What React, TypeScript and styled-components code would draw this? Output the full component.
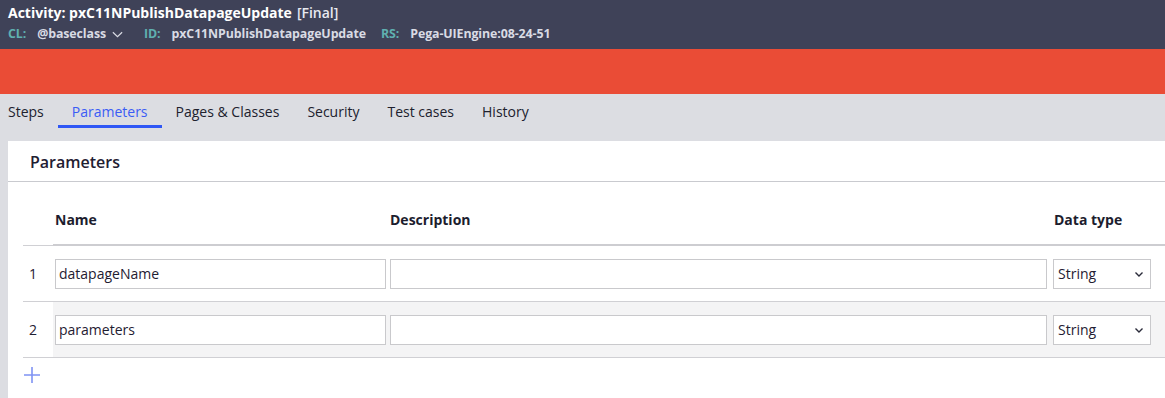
import React from "react";
import styled, { createGlobalStyle } from "styled-components";

const Global = createGlobalStyle`
  html, body { margin: 0; padding: 0; }
  body {
    font-family: "Open Sans", "Noto Sans", sans-serif;
    background: #dcdde2;
    width: 1165px;
    height: 398px;
    overflow: hidden;
    color: #1f2032;
  }
  * { box-sizing: border-box; }
`;

const Page = styled.div`
  display: flex;
  flex-direction: column;
  height: 398px;
`;

const Header = styled.header`
  background: #3f4258;
  height: 49px;
  padding: 3px 8px 0;
  display: flex;
  flex-direction: column;
`;

const Title = styled.div`
  color: #ffffff;
  font-size: 14px;
  font-weight: 700;
  line-height: 20px;
  display: flex;
  align-items: baseline;
  gap: 5px;
`;

const Status = styled.span`
  font-size: 14px;
  font-weight: 600;
  color: #e8e9ef;
`;

const Meta = styled.div`
  display: flex;
  align-items: center;
  margin-top: 2px;
  font-size: 12.4px;
  font-weight: 700;
  line-height: 18px;
  letter-spacing: -0.1px;
`;

const MetaItem = styled.span`
  display: inline-flex;
  align-items: center;
  margin-right: 15px;
`;

const MetaLabel = styled.span`
  color: #5fb0b0;
  margin-right: 11px;
`;

const MetaValue = styled.span`
  color: #d9dbe4;
`;

const Chevron = styled.svg`
  margin-left: 6px;
  margin-right: 6px;
`;

const Banner = styled.div`
  background: #ea4c36;
  height: 45px;
`;

const Tabs = styled.nav`
  height: 47px;
  display: flex;
  align-items: stretch;
  padding-left: 8px;
`;

const Tab = styled.div<{ $active?: boolean; $first?: boolean }>`
  font-size: 14px;
  line-height: 20px;
  padding: 8px 14px 0 ${(p) => (p.$first ? "0" : "14px")};
  height: 34px;
  color: ${(p) => (p.$active ? "#3a5cf5" : "#20212e")};
  border-bottom: 3px solid ${(p) => (p.$active ? "#2f57f5" : "transparent")};
`;

const Panel = styled.section`
  flex: 1;
  margin-left: 8px;
  background: #ffffff;
  display: flex;
  flex-direction: column;
`;

const PanelTitle = styled.h2`
  margin: 0;
  height: 41px;
  padding: 10px 0 0 22px;
  font-size: 16px;
  font-weight: 600;
  line-height: 22px;
  color: #1f2032;
  border-bottom: 1px solid #c9cacf;
`;

const Table = styled.div`
  padding-left: 15px;
  display: flex;
  flex-direction: column;
`;

const HeadRow = styled.div`
  display: grid;
  grid-template-columns: 30px 1fr;
  height: 64px;
`;

const HeadNum = styled.div`
  border-bottom: 1px solid #d0d0d4;
`;

const HeadCells = styled.div`
  display: grid;
  grid-template-columns: 331px 657px 100px;
  column-gap: 4px;
  padding-left: 2px;
  align-items: end;
  padding-bottom: 14px;
  border-bottom: 2px solid #cdcdd1;
`;

const HeadCell = styled.div<{ $shift?: number }>`
  font-size: 14px;
  font-weight: 700;
  line-height: 20px;
  color: #1c1d2e;
  padding-left: ${(p) => p.$shift ?? 0}px;
  ${(p) => (p.$shift ? "margin-left: 2px;" : "")}
`;

const Row = styled.div`
  display: grid;
  grid-template-columns: 30px 1fr;
  height: 56px;
  border-bottom: 1px solid #d0d0d4;
`;

const RowNum = styled.div`
  display: flex;
  align-items: center;
  padding-left: 6px;
  font-size: 14px;
  color: #1f2032;
`;

const RowCells = styled.div<{ $alt?: boolean }>`
  background: ${(p) => (p.$alt ? "#f4f4f5" : "transparent")};
  display: grid;
  grid-template-columns: 331px 657px 100px;
  column-gap: 4px;
  padding-left: 2px;
  align-items: center;
`;

const Input = styled.div`
  height: 30px;
  border: 1px solid #c9c9cc;
  background: #ffffff;
  font-size: 14px;
  line-height: 28px;
  padding-left: 3px;
  color: #1f2032;
`;

const Select = styled.div`
  margin-left: 2px;
  height: 30px;
  border: 1px solid #c9c9cc;
  background: #ffffff;
  font-size: 14px;
  line-height: 28px;
  padding: 0 6px 0 4px;
  color: #1f2032;
  display: flex;
  justify-content: space-between;
  align-items: center;
`;

const AddButton = styled.div`
  padding: 9px 0 0 1px;
  line-height: 0;
`;

const ChevronDown = ({ color, size }: { color: string; size: number }) => (
  <svg width={size} height={size} viewBox="0 0 10 10" fill="none">
    <path d="M1.5 3.5 L5 7 L8.5 3.5" stroke={color} strokeWidth="1.4" />
  </svg>
);

const rows = [
  { n: 1, name: "datapageName" },
  { n: 2, name: "parameters" },
];

export default function App() {
  return (
    <>
      <Global />
      <Page>
        <Header>
          <Title>
            Activity: pxC11NPublishDatapageUpdate <Status>[Final]</Status>
          </Title>
          <Meta>
            <MetaItem>
              <MetaLabel>CL:</MetaLabel>
              <MetaValue>@baseclass</MetaValue>
              <Chevron width="11" height="11" viewBox="0 0 10 10" fill="none">
                <path d="M0.8 3 L5 7 L9.2 3" stroke="#d9dbe4" strokeWidth="1.1" />
              </Chevron>
            </MetaItem>
            <MetaItem>
              <MetaLabel>ID:</MetaLabel>
              <MetaValue>pxC11NPublishDatapageUpdate</MetaValue>
            </MetaItem>
            <MetaItem>
              <MetaLabel>RS:</MetaLabel>
              <MetaValue>Pega-UIEngine:08-24-51</MetaValue>
            </MetaItem>
          </Meta>
        </Header>
        <Banner />
        <Tabs>
          <Tab $first>Steps</Tab>
          <Tab $active>Parameters</Tab>
          <Tab>Pages &amp; Classes</Tab>
          <Tab>Security</Tab>
          <Tab>Test cases</Tab>
          <Tab>History</Tab>
        </Tabs>
        <Panel>
          <PanelTitle>Parameters</PanelTitle>
          <Table>
            <HeadRow>
              <HeadNum />
              <HeadCells>
                <HeadCell>Name</HeadCell>
                <HeadCell>Description</HeadCell>
                <HeadCell $shift={1}>Data type</HeadCell>
              </HeadCells>
            </HeadRow>
            {rows.map((r) => (
              <Row key={r.n}>
                <RowNum>{r.n}</RowNum>
                <RowCells $alt={r.n % 2 === 0}>
                  <Input>{r.name}</Input>
                  <Input />
                  <Select>
                    String
                    <ChevronDown color="#2a2b3a" size={10} />
                  </Select>
                </RowCells>
              </Row>
            ))}
            <AddButton>
              <svg width="16" height="16" viewBox="0 0 16 16">
                <path d="M8 0 V16 M0 8 H16" stroke="#7f93f3" strokeWidth="1.6" />
              </svg>
            </AddButton>
          </Table>
        </Panel>
      </Page>
    </>
  );
}
